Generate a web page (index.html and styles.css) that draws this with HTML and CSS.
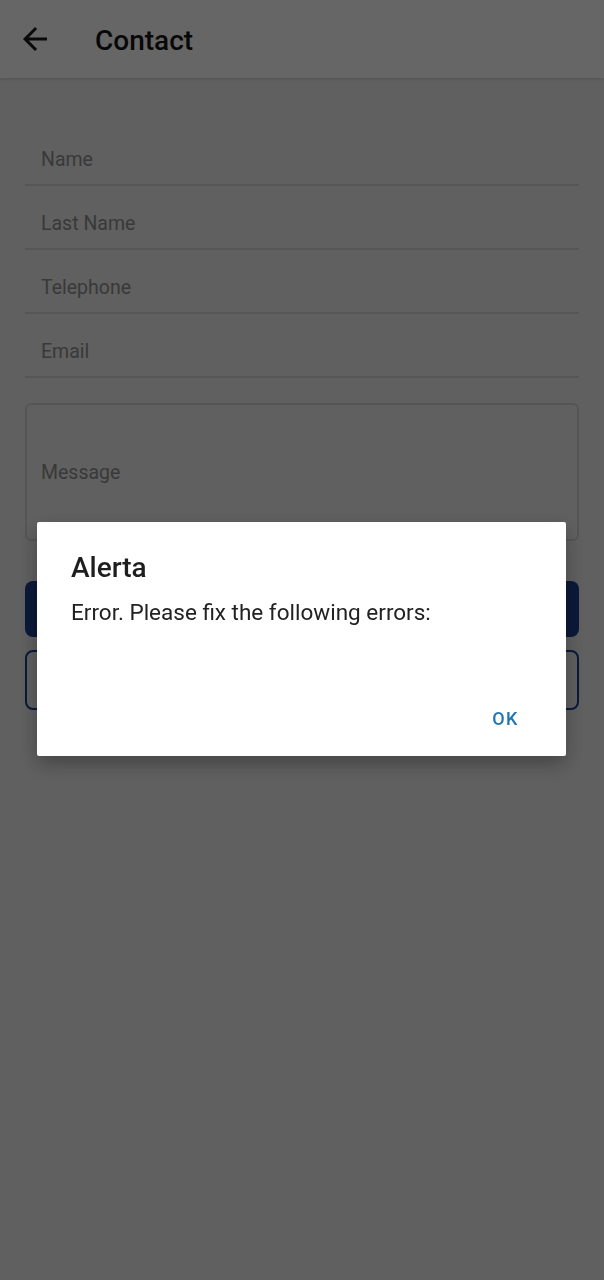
FILE: index.html
```html
<!DOCTYPE html>
<html>
<head>
<meta charset="utf-8">
<link rel="stylesheet" href="styles.css">
</head>
<body>
<div class="app">
  <header class="topbar">
    <svg class="back" viewBox="0 0 24 24" width="36" height="36"><path d="M20 11H7.83l5.59-5.59L12 4l-8 8 8 8 1.41-1.41L7.83 13H20v-2z" fill="#1a1a1a"/></svg>
    <h1 class="title">Contact</h1>
  </header>
  <main class="form">
    <div class="field"><span class="ph">Name</span></div>
    <div class="field"><span class="ph">Last Name</span></div>
    <div class="field"><span class="ph">Telephone</span></div>
    <div class="field"><span class="ph">Email</span></div>
    <div class="textarea"><span class="ph">Message</span></div>
    <div class="btn btn-primary"></div>
    <div class="btn btn-outline"></div>
  </main>
</div>
<div class="overlay">
  <div class="dialog">
    <h2 class="dlg-title">Alerta</h2>
    <p class="dlg-text">Error. Please fix the following errors:</p>
    <div class="dlg-actions"><span class="dlg-ok">OK</span></div>
  </div>
</div>
</body>
</html>
```
FILE: styles.css
```css
html, body {
  margin: 0;
  padding: 0;
}
body {
  width: 604px;
  height: 1280px;
  background: #f0f0f0;
  font-family: Roboto, "Liberation Sans", sans-serif;
  overflow: hidden;
}
.app {
  height: 1280px;
}
.topbar {
  height: 78px;
  background: #ffffff;
  display: flex;
  align-items: center;
  box-shadow: 0 1px 3px rgba(0,0,0,0.15);
}
.back {
  margin-left: 17px;
  margin-top: 0;
}
.title {
  margin: 3px 0 0 42px;
  font-size: 28px;
  font-weight: 500;
  color: #161616;
}
.form {
  padding: 44px 25px 0 25px;
  display: flex;
  flex-direction: column;
}
.field {
  height: 62px;
  border-bottom: 2px solid #d6d6d6;
  display: flex;
  align-items: center;
  padding-left: 16px;
  box-sizing: content-box;
}
.field .ph {
  transform: translateY(6px);
}
.ph {
  font-size: 19.5px;
  color: #8f8f8f;
}
.textarea {
  margin-top: 25px;
  height: 134px;
  border: 2px solid #d4d4d4;
  border-radius: 6px;
  display: flex;
  align-items: center;
  padding-left: 14px;
}
.btn {
  border-radius: 8px;
  box-sizing: border-box;
}
.btn-primary {
  margin-top: 40px;
  height: 56px;
  background: #1c3f8f;
}
.btn-outline {
  margin-top: 13px;
  height: 60px;
  border: 2px solid #1c3f8f;
}
.overlay {
  position: fixed;
  inset: 0;
  background: rgba(0,0,0,0.6);
  display: flex;
  align-items: center;
  justify-content: center;
}
.dialog {
  width: 529px;
  height: 234px;
  margin: -2px 0 0 -1px;
  background: #ffffff;
  border-radius: 2px;
  box-sizing: border-box;
  padding: 30px 34px 0 34px;
  display: flex;
  flex-direction: column;
  box-shadow: 0 8px 20px rgba(0,0,0,0.3);
}
.dlg-title {
  margin: 0;
  font-size: 28px;
  font-weight: 500;
  color: #1e1e1e;
  line-height: 32px;
}
.dlg-text {
  margin: 14px 0 0 0;
  font-size: 22.5px;
  line-height: 28px;
  color: #222222;
}
.dlg-actions {
  margin-top: auto;
  margin-bottom: 27px;
  display: flex;
  justify-content: flex-end;
  padding-right: 13px;
}
.dlg-ok {
  font-size: 18px;
  font-weight: 500;
  letter-spacing: 1.5px;
  color: #1f74b3;
}
```
